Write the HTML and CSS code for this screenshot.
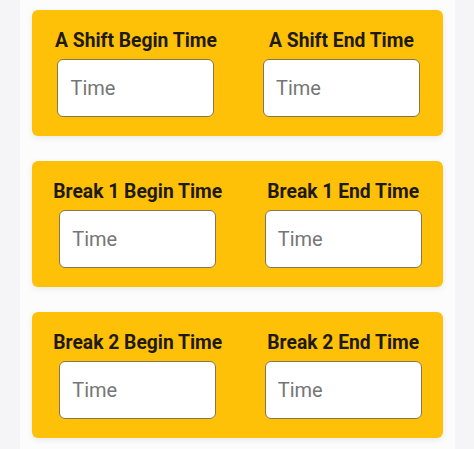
FILE: index.html
```html
<!DOCTYPE html>
<html lang="en">
<head>
    <meta charset="UTF-8">
    <meta name="viewport" content="width=device-width, initial-scale=1.0">
    <title>Shift Times</title>
    <link rel="stylesheet" href="styles.css">
</head>
<body>
    <div class="container">
        <div class="tarjeta">
            <div class="campo">
                <label>A Shift Begin Time</label>
                <input type="text" placeholder="Time">
            </div>
            <div class="campo">
                <label>A Shift End Time</label>
                <input type="text" placeholder="Time">
            </div>
        </div>
        <div class="tarjeta">
            <div class="campo">
                <label>Break 1 Begin Time</label>
                <input type="text" placeholder="Time">
            </div>
            <div class="campo">
                <label>Break 1 End Time</label>
                <input type="text" placeholder="Time">
            </div>
        </div>
        <div class="tarjeta">
            <div class="campo">
                <label>Break 2 Begin Time</label>
                <input type="text" placeholder="Time">
            </div>
            <div class="campo">
                <label>Break 2 End Time</label>
                <input type="text" placeholder="Time">
            </div>
        </div>
    </div>
</body>
</html>
```

FILE: styles.css
```css
body {
    margin: 0;
    padding: 0;
    background: #f5f5f7;
    font-family: Roboto, "Liberation Sans", sans-serif;
}
.container {
    width: 435px;
    margin-left: 20px;
    min-height: 449px;
    background: #fcfcfc;
    padding: 10px 12px 0 12px;
    box-sizing: border-box;
    display: flex;
    flex-direction: column;
    gap: 25px;
}
.tarjeta {
    background: #ffc107;
    border-radius: 6px;
    box-shadow: 0 2px 6px rgba(0, 0, 0, 0.08);
    height: 126px;
    box-sizing: border-box;
    padding: 19px 0;
    display: flex;
    justify-content: space-around;
    align-items: flex-start;
}
.campo {
    display: flex;
    flex-direction: column;
    align-items: center;
    gap: 7px;
}
.campo label {
    font-size: 19.3px;
    font-weight: 700;
    color: #1e1a10;
    white-space: nowrap;
}
.campo input {
    width: 157px;
    height: 58px;
    box-sizing: border-box;
    border: 1px solid #857550;
    border-radius: 6px;
    background: #fff;
    padding: 0 12px;
    font-family: Roboto, "Liberation Sans", sans-serif;
    font-size: 20px;
    color: #333;
    outline: none;
}
.campo input::placeholder {
    color: #767676;
}
```
